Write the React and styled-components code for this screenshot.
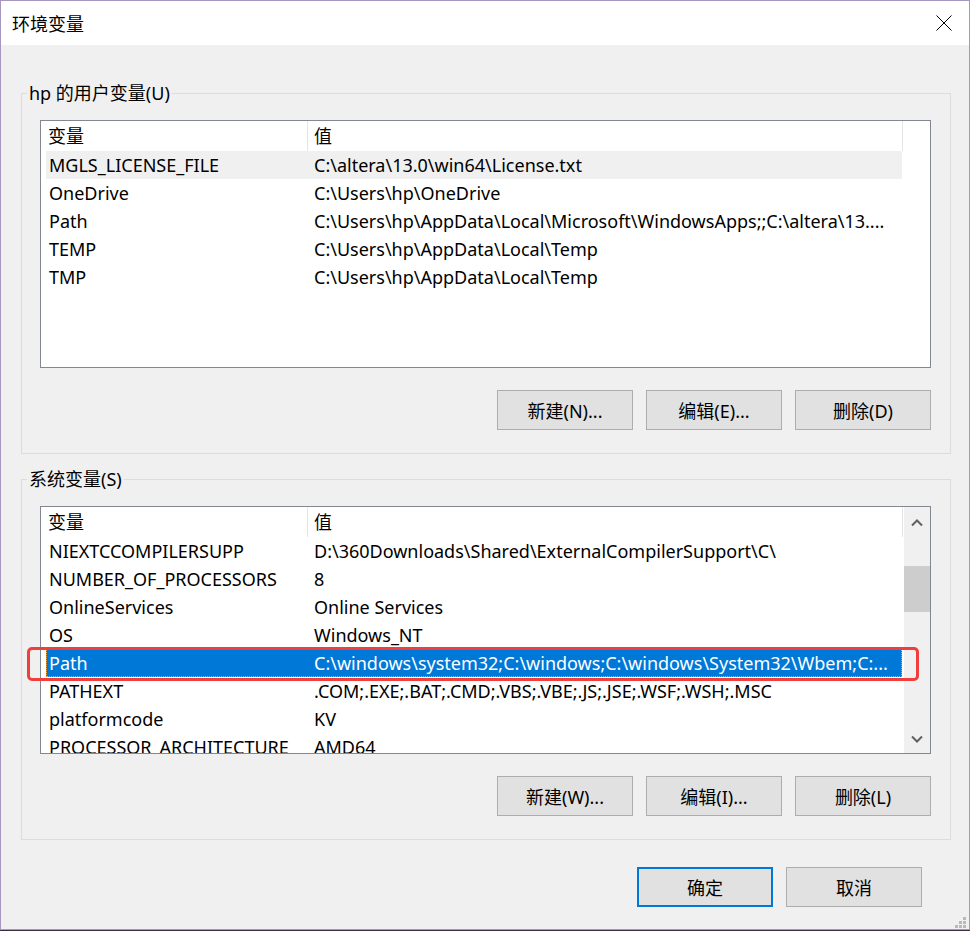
import React from "react"
import styled, { createGlobalStyle } from "styled-components"

const GlobalStyle = createGlobalStyle`
  body {
    margin: 0;
    background: #3b2d44;
    font-family: "Noto Sans", "Noto Sans CJK SC", sans-serif;
    color: #000;
  }
`

const userVars = [
  { name: "MGLS_LICENSE_FILE", value: "C:\\altera\\13.0\\win64\\License.txt", state: "inactive" },
  { name: "OneDrive", value: "C:\\Users\\hp\\OneDrive" },
  { name: "Path", value: "C:\\Users\\hp\\AppData\\Local\\Microsoft\\WindowsApps;;C:\\altera\\13...." },
  { name: "TEMP", value: "C:\\Users\\hp\\AppData\\Local\\Temp" },
  { name: "TMP", value: "C:\\Users\\hp\\AppData\\Local\\Temp" },
]

const sysVars = [
  { name: "NIEXTCCOMPILERSUPP", value: "D:\\360Downloads\\Shared\\ExternalCompilerSupport\\C\\" },
  { name: "NUMBER_OF_PROCESSORS", value: "8" },
  { name: "OnlineServices", value: "Online Services" },
  { name: "OS", value: "Windows_NT" },
  { name: "Path", value: "C:\\windows\\system32;C:\\windows;C:\\windows\\System32\\Wbem;C:...", state: "active" },
  { name: "PATHEXT", value: ".COM;.EXE;.BAT;.CMD;.VBS;.VBE;.JS;.JSE;.WSF;.WSH;.MSC" },
  { name: "platformcode", value: "KV" },
  { name: "PROCESSOR_ARCHITECTURE", value: "AMD64" },
]

const Window = styled.div`
  position: relative;
  width: 968px;
  height: 928px;
  border: 1px solid #a597c0;
  background: #f0f0f0;
  display: flex;
  flex-direction: column;
`

const TitleBar = styled.div`
  height: 44px;
  background: #fff;
  display: flex;
  align-items: center;
  justify-content: space-between;
  padding-left: 11px;
  font-size: 18px;
`

const CloseBox = styled.div`
  display: flex;
  align-items: center;
  margin-right: 17px;
`

const Body = styled.div`
  padding: 36px 18px 0 20px;
  display: flex;
  flex-direction: column;
`

const GroupBox = styled.fieldset`
  margin: 0;
  padding: 0;
  min-width: 0;
  border: 1px solid #dcdcdc;
  & + & {
    margin-top: 13px;
  }
`

const Legend = styled.legend`
  margin-left: 5px;
  padding: 0 2px;
  font-size: 18px;
  line-height: 24px;
`

const GroupContent = styled.div`
  padding: 15px 19px 23px 18px;
`

const ListFrame = styled.div`
  position: relative;
`

const ListView = styled.div`
  height: 246px;
  border: 1px solid #828790;
  background: #fff;
  display: flex;
  overflow: hidden;
`

const ListMain = styled.div`
  flex: 1;
  min-width: 0;
  display: flex;
  flex-direction: column;
`

const Header = styled.div`
  display: grid;
  grid-template-columns: 267px 595px;
  height: 30px;
  flex-shrink: 0;
`

const HeaderCell = styled.div`
  border-right: 1px solid #e5e5e5;
  padding-left: ${p => p.$pad}px;
  font-size: 18px;
  line-height: 30px;
`

const Row = styled.div`
  display: grid;
  grid-template-columns: 261px 595px;
  width: 856px;
  margin-left: 5px;
  height: 28px;
  flex-shrink: 0;
  font-size: 18px;
  line-height: 27px;
  padding-top: 1px;
  box-sizing: border-box;
  background: ${p => (p.$state === "active" ? "#0078d7" : p.$state === "inactive" ? "#f0f0f0" : "transparent")};
  color: ${p => (p.$state === "active" ? "#fff" : "#000")};
  outline: ${p => (p.$state === "active" ? "1px dotted #e9a547" : "none")};
  outline-offset: -1px;
`

const Cell = styled.div`
  padding-left: ${p => p.$pad}px;
  padding-right: 4px;
  white-space: nowrap;
  overflow: hidden;
  text-overflow: ellipsis;
`

const ScrollBar = styled.div`
  width: 26px;
  flex-shrink: 0;
  background: #f0f0f0;
  display: flex;
  flex-direction: column;
`

const ArrowButton = styled.div`
  height: ${p => p.$h}px;
  display: flex;
  align-items: center;
  justify-content: center;
`

const Track = styled.div`
  flex: 1;
  padding-top: 27px;
`

const Thumb = styled.div`
  height: 46px;
  background: #cdcdcd;
`

const Annotation = styled.div`
  position: absolute;
  left: -13px;
  top: 141px;
  width: 886px;
  height: 28px;
  border: 3px solid #f23d3d;
  border-radius: 5px;
  pointer-events: none;
`

const ButtonRow = styled.div`
  display: flex;
  justify-content: flex-end;
  gap: 13px;
  margin-top: 22px;
`

const Button = styled.button`
  width: 136px;
  height: 40px;
  box-sizing: border-box;
  background: #e1e1e1;
  border: ${p => (p.$default ? "2px solid #0078d7" : "1px solid #adadad")};
  font-family: inherit;
  font-size: 18px;
  color: #000;
  padding: 0;
`

const Footer = styled.div`
  display: flex;
  justify-content: flex-end;
  gap: 13px;
  padding: 27px 47px 0 0;
`

const SizeGrip = styled.svg`
  position: absolute;
  right: 2px;
  bottom: 0;
`

const Chevron = ({ down }) => (
  <svg width="12" height="8" viewBox="0 0 12 8">
    <polyline
      points={down ? "1,1.5 6,6.5 11,1.5" : "1,6.5 6,1.5 11,6.5"}
      fill="none"
      stroke="#606060"
      strokeWidth="2"
    />
  </svg>
)

const VarList = ({ rows, scroll, highlight }) => (
  <ListFrame>
    <ListView>
      <ListMain>
        <Header>
          <HeaderCell $pad={7}>变量</HeaderCell>
          <HeaderCell $pad={6}>值</HeaderCell>
        </Header>
        {rows.map(r => (
          <Row key={r.name + r.value} $state={r.state}>
            <Cell $pad={3}>{r.name}</Cell>
            <Cell $pad={7}>{r.value}</Cell>
          </Row>
        ))}
      </ListMain>
      {scroll && (
        <ScrollBar>
          <ArrowButton $h={32}>
            <Chevron />
          </ArrowButton>
          <Track>
            <Thumb />
          </Track>
          <ArrowButton $h={28}>
            <Chevron down />
          </ArrowButton>
        </ScrollBar>
      )}
    </ListView>
    {highlight && <Annotation />}
  </ListFrame>
)

export default function App() {
  return (
    <>
      <GlobalStyle />
      <Window>
        <TitleBar>
          环境变量
          <CloseBox>
            <svg width="16" height="16" viewBox="0 0 16 16">
              <path d="M0.5 0.5 L15.5 15.5 M15.5 0.5 L0.5 15.5" stroke="#000" strokeWidth="1" />
            </svg>
          </CloseBox>
        </TitleBar>
        <Body>
          <GroupBox>
            <Legend>hp 的用户变量(U)</Legend>
            <GroupContent>
              <VarList rows={userVars} />
              <ButtonRow>
                <Button>新建(N)...</Button>
                <Button>编辑(E)...</Button>
                <Button>删除(D)</Button>
              </ButtonRow>
            </GroupContent>
          </GroupBox>
          <GroupBox>
            <Legend>系统变量(S)</Legend>
            <GroupContent>
              <VarList rows={sysVars} scroll highlight />
              <ButtonRow>
                <Button>新建(W)...</Button>
                <Button>编辑(I)...</Button>
                <Button>删除(L)</Button>
              </ButtonRow>
            </GroupContent>
          </GroupBox>
        </Body>
        <Footer>
          <Button $default>确定</Button>
          <Button>取消</Button>
        </Footer>
        <SizeGrip width="12" height="12" viewBox="0 0 12 12">
          {[[8, 0], [4, 4], [8, 4], [0, 8], [4, 8], [8, 8]].map(([x, y]) => (
            <rect key={x + "-" + y} x={x} y={y} width="3" height="3" fill="#b9b9b9" />
          ))}
        </SizeGrip>
      </Window>
    </>
  )
}
